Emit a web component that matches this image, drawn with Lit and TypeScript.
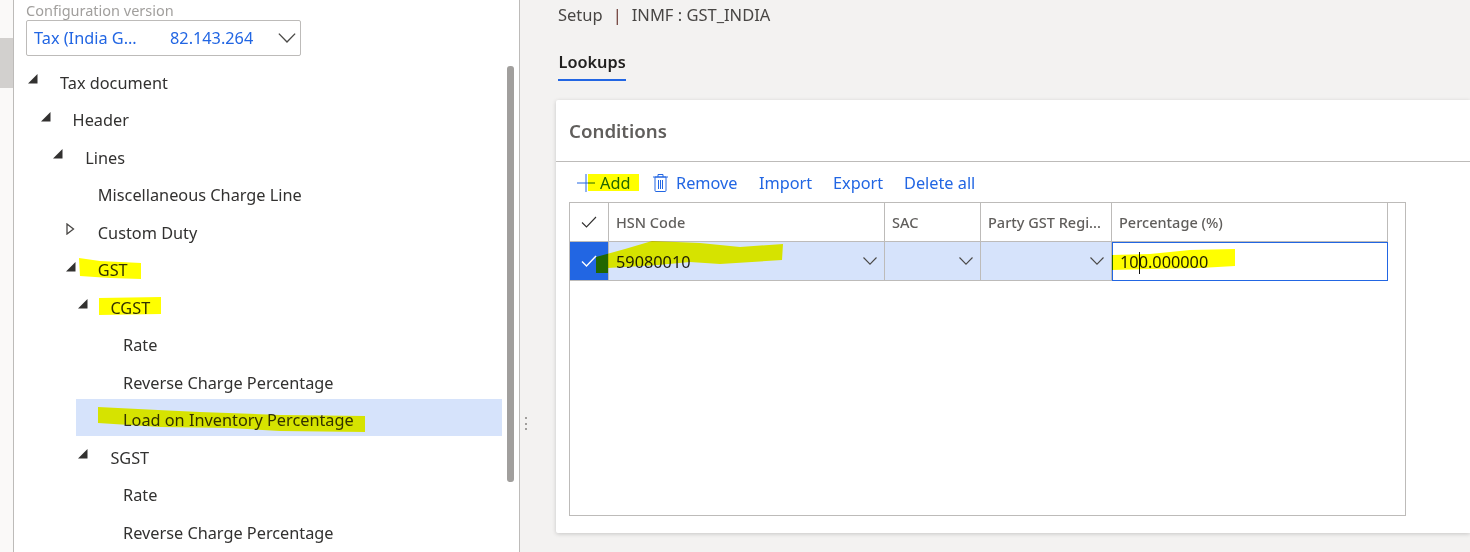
import { LitElement, html, css, svg } from "lit";
import { customElement } from "lit/decorators.js";

type Node = { t: string; l: number; k?: "open" | "closed"; sel?: boolean };
const NODES: Node[] = [
  { t: "Tax document", l: 0, k: "open" },
  { t: "Header", l: 1, k: "open" },
  { t: "Lines", l: 2, k: "open" },
  { t: "Miscellaneous Charge Line", l: 3 },
  { t: "Custom Duty", l: 3, k: "closed" },
  { t: "GST", l: 3, k: "open" },
  { t: "CGST", l: 4, k: "open" },
  { t: "Rate", l: 5 },
  { t: "Reverse Charge Percentage", l: 5 },
  { t: "Load on Inventory Percentage", l: 5, sel: true },
  { t: "SGST", l: 4, k: "open" },
  { t: "Rate", l: 5 },
  { t: "Reverse Charge Percentage", l: 5 },
];

const chevron = (w = 14, h = 8) => html`<svg class="chev" width=${w} height=${h} viewBox="0 0 14 8"><path d="M.5.5 7 7.2 13.500.5" fill="none" stroke="#4a4947" stroke-width="1.1"/></svg>`;

const MARKS = [
  "M79 258 L100 261 L141 263 L141 279 L110 278 L80 276Z",
  "M99 298 L161 297 L161 314 L99 315Z",
  "M98 407 L158 410 L200 412 L280 415 L365 416 L365 432 L280 431 L230 428 L160 427 L98 423Z",
  "M588 174 L639 174 L639 191 L588 191Z",
  "M596 257 L625 249 L652 241 L700 243 L740 247 L783 244 L782 260 L720 264 L690 262 L658 265 L608 268 L608 273 L596 273Z",
  "M1112 255 L1150 254 L1190 250 L1235 249 L1235 266 L1200 268 L1150 269 L1112 270Z",
];

@customElement("app-root")
export class AppRoot extends LitElement {
  static styles = css`
    :host { display: block; position: relative; width: 1470px; height: 552px; overflow: hidden; background: #f3f2f1; font-family: "Noto Sans", "Open Sans", sans-serif; font-size: 16.3px; color: #323130; }
    * { box-sizing: border-box; }
    .page { display: flex; height: 552px; }
    .strip { width: 14px; flex: none; background: #faf9f8; border-right: 1px solid #bdbbb9; padding-top: 38px; }
    .strip div { width: 13px; height: 50px; background: #d2d0ce; }
    .side { width: 506px; flex: none; background: #fff; border-right: 1px solid #bdbbb9; display: flex; position: relative; }
    .side-main { width: 488px; flex: none; }
    .cfg { padding-left: 12px; height: 60px; }
    .cfg-label { font-size: 14.5px; line-height: 19px; height: 19px; color: #a19f9d; margin-top: 1px; }
    .select { width: 275px; height: 36px; border: 1px solid #bdbbb9; border-radius: 2px; display: flex; align-items: center; color: #2266e3; padding-left: 7px; }
    .select .a { width: 136px; }
    .select .b { width: 108px; }
    .tree { display: flex; flex-direction: column; margin-left: -1px; }
    .row { height: 37.500px; display: flex; align-items: center; flex: none; }
    .row.sel { background: #d6e3fb; }
    .row-t { padding-top: 6px; }
    .tw { width: 47px; flex: none; padding-left: 15px; display: flex; align-items: center; }
    .tw svg { display: block; margin-top: -1px; }
    .scroll { width: 7px; height: 416px; margin: 66px 0 0 5px; background: #a19f9d; border-radius: 3px; flex: none; }
    .main { flex: 1; min-width: 0; display: flex; }
    .grip { width: 36px; flex: none; padding: 417px 0 0 5px; display: flex; flex-direction: column; align-items: flex-start; gap: 3.500px; }
    .grip i { width: 2px; height: 2px; background: #a19f9d; }
    .content { flex: 1; min-width: 0; }
    .crumb { height: 30px; display: flex; align-items: center; padding: 0 0 2px 2px; font-size: 16.5px; color: #484644; }
    .crumb b { font-weight: 400; color: #6b3a34; margin: 0 10px; }
    .tabs { height: 70px; padding-left: 2px; padding-top: 20px; }
    .tab { display: inline-block; font-weight: 600; font-size: 16.300px; color: #201f1e; height: 31px; line-height: 24px; border-bottom: 2px solid #2266e3; padding: 0 .5px; }
    .card { height: 433px; background: #fff; border-radius: 2px 0 0 2px; box-shadow: 0 1px 4px rgba(0,0,0,.18); }
    .card-h { height: 62px; border-bottom: 1px solid #bdbbb9; padding-left: 13px; display: flex; align-items: center; font-size: 18.700px; font-weight: 600; color: #605e5c; }
    .tools { height: 40px; padding: 1px 0 0 21px; display: flex; align-items: center; color: #2266e3; }
    .tool { display: flex; align-items: center; }
    .grid { margin-left: 13px; width: 837px; height: 314px; border: 1px solid #bdbbb9; }
    .g-row { display: grid; grid-template-columns: 39px 276px 96px 131px 276px; height: 38.500px; }
    .g-row.dt { height: 39px; }
    .g-row > div { border-right: 1px solid #bdbbb9; border-bottom: 1px solid #bdbbb9; display: flex; align-items: center; }
    .hd > div { font-size: 14.500px; font-weight: 500; color: #605e5c; padding-left: 7px; white-space: nowrap; overflow: hidden; }
    .hd > div:first-child { padding-left: 11px; }
    .dt > div { background: #d6e3fb; color: #201f1e; padding: 0 7px; justify-content: space-between; }
    .dt > div > span { padding-top: 3px; }
    .dt > .ck { background: #2266e3; padding-left: 11px; }
    .dt > .pc { background: #fff; border: 1px solid #2266e3; padding-left: 7px; justify-content: flex-start; }
    .caret { display: inline-block; width: 0; height: 22px; border-left: 1px solid #111; margin-right: -1px; vertical-align: middle; }
    .marks { position: absolute; inset: 0; mix-blend-mode: multiply; pointer-events: none; }
  `;

  render() {
    return html`
      <div class="page">
        <div class="strip"><div></div></div>
        <div class="side">
          <div class="side-main">
            <div class="cfg">
              <div class="cfg-label">Configuration version</div>
              <div class="select"><span class="a">Tax (India G...</span><span class="b">82.143.264</span>${chevron(18, 10)}</div>
            </div>
            <div class="tree">
              ${NODES.map((n) => html`
                <div class="row ${n.sel ? "sel" : ""}" style="margin-left:${(n.l * 12.6).toFixed(1)}px">
                  <span class="tw">${n.k === "open"
                    ? html`<svg width="10" height="10" viewBox="0 0 10 10"><path d="M0 9.500 9.500 9.500 9.500 0Z" fill="#323130"/></svg>`
                    : n.k === "closed"
                    ? html`<svg width="9" height="12" viewBox="0 0 9 12"><path d="M1 1 7.500 6 1 11Z" fill="none" stroke="#484644" stroke-width="1.300"/></svg>`
                    : ""}</span>
                  <span class="row-t">${n.t}</span>
                </div>`)}
            </div>
          </div>
          <div class="scroll"></div>
        </div>
        <div class="main">
          <div class="grip"><i></i><i></i><i></i></div>
          <div class="content">
            <div class="crumb">Setup<b>|</b>INMF : GST_INDIA</div>
            <div class="tabs"><span class="tab">Lookups</span></div>
            <div class="card">
              <div class="card-h">Conditions</div>
              <div class="tools">
                <span class="tool" style="width:76px"><svg width="18" height="18" viewBox="0 0 18 18" style="margin-right:5px"><path d="M9 0V18M0 9H18" stroke="#2266e3" stroke-width="1"/></svg>Add</span>
                <span class="tool" style="width:106px"><svg width="15" height="19" viewBox="0 0 15 19" style="margin-right:8px"><path d="M2 4H13V17.500Q13 18.500 12 18.500H3Q2 18.500 2 17.500ZM0 4H15M5 4V1.500H10V4M5.500 7V16M7.500 7V16M9.500 7V16" fill="none" stroke="#2266e3" stroke-width="1"/></svg>Remove</span>
                <span class="tool" style="width:74px">Import</span>
                <span class="tool" style="width:71px">Export</span>
                <span class="tool">Delete all</span>
              </div>
              <div class="grid">
                <div class="g-row hd">
                  <div><svg width="16" height="12" viewBox="0 0 16 12"><path d="M1 6.500 5.500 11 15 1" fill="none" stroke="#323130" stroke-width="1.100"/></svg></div>
                  <div>HSN Code</div><div>SAC</div><div>Party GST Regi...</div><div>Percentage (%)</div>
                </div>
                <div class="g-row dt">
                  <div class="ck"><svg width="16" height="12" viewBox="0 0 16 12"><path d="M1 6.500 5.500 11 15 1" fill="none" stroke="#fff" stroke-width="1.400"/></svg></div>
                  <div><span>59080010</span>${chevron()}</div>
                  <div><span></span>${chevron()}</div>
                  <div><span></span>${chevron()}</div>
                  <div class="pc"><span>10<span class="caret"></span>0.000000</span></div>
                </div>
              </div>
            </div>
          </div>
        </div>
      </div>
      <svg class="marks" width="1470" height="552" viewBox="0 0 1470 552">
        ${MARKS.map((d) => svg`<path d=${d} fill="#ffff00"/>`)}
      </svg>
    `;
  }
}
